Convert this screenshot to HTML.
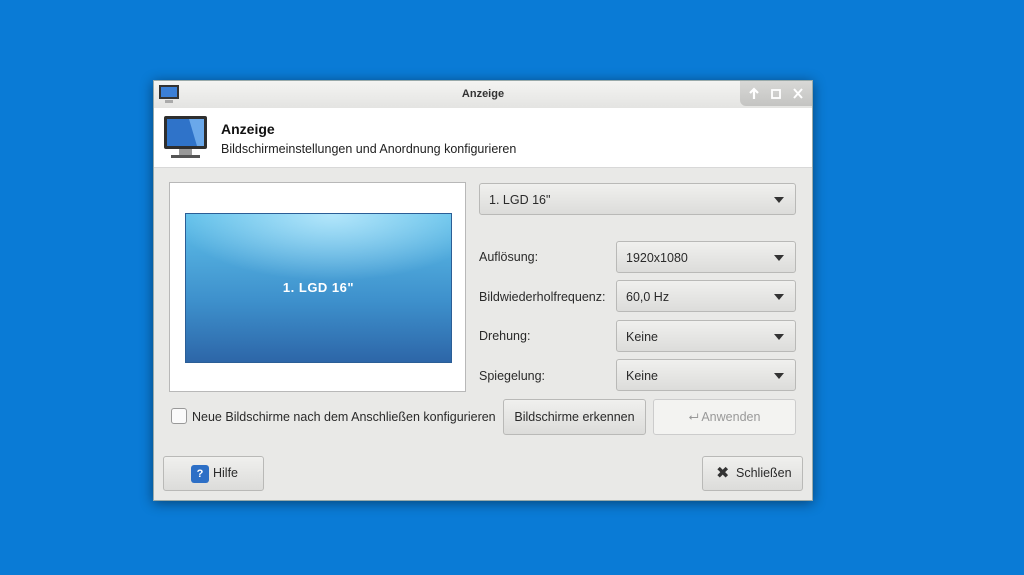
<!DOCTYPE html>
<html><head><meta charset="utf-8"><style>
*{box-sizing:border-box;margin:0;padding:0}
body{width:1024px;height:575px;background:#0a7bd6;font-family:"Liberation Sans",sans-serif;position:relative;overflow:hidden;color:#2a2a2a}
.win{position:absolute;left:153px;top:80px;width:660px;height:421px;background:#e9e9e7;border:1px solid #9aa;box-shadow:0 2px 12px rgba(0,0,0,.45)}
.tb{position:absolute;left:0;top:0;width:658px;height:27px;background:linear-gradient(#f4f4f2,#e4e4e2);font-size:11px;text-align:center;line-height:27px;color:#333;font-weight:bold}
.ctl{position:absolute;right:0;top:0;width:72px;height:25px;background:linear-gradient(#d8d8d6,#c4c4c2);border-bottom-left-radius:6px}
.hd{position:absolute;left:0;top:27px;width:658px;height:60px;background:#fff;border-bottom:1px solid #d8d8d8}
.abs{position:absolute}
.btn{position:absolute;background:linear-gradient(#f0f0ee,#dcdcda);border:1px solid #b9b9b7;border-radius:3px;font-size:12.5px;color:#2a2a2a}
.combo{padding-left:9px;line-height:32px}
.combo:after{content:"";position:absolute;right:11px;top:13px;border-left:5px solid transparent;border-right:5px solid transparent;border-top:6px solid #333}
.lbl{position:absolute;font-size:12.5px;left:325px}
</style></head><body>
<div class="win">
 <div class="tb">Anzeige
  <svg class="abs" style="left:4px;top:3px" width="22" height="20" viewBox="0 0 22 20"><rect x="1" y="1" width="20" height="14" fill="#333"/><rect x="3" y="3" width="16" height="10" fill="#3b7fd6"/><rect x="7" y="16" width="8" height="3" fill="#aaa"/></svg>
  <div class="ctl"><svg width="72" height="25" viewBox="0 0 72 25"><path d="M14 18V9M10 12l4-4 4 4" stroke="#fff" stroke-width="2.2" fill="none"/><rect x="32" y="9" width="8" height="8" stroke="#fff" stroke-width="1.8" fill="none"/><path d="M54 8l8 9M62 8l-8 9" stroke="#fff" stroke-width="2" fill="none"/></svg></div>
 </div>
 <div class="hd">
  <svg class="abs" style="left:9px;top:7px" width="45" height="46" viewBox="0 0 45 46"><rect x="1" y="1" width="43" height="33" rx="2" fill="#2e2e2e"/><rect x="4" y="4" width="37" height="27" fill="#2f73c9"/><polygon points="26,4 41,4 41,31 34,31" fill="#6aa8ea"/><rect x="16" y="34" width="13" height="6" fill="#999"/><rect x="8" y="40" width="29" height="3" fill="#555"/></svg>
  <div class="abs" style="left:67px;top:13px;font-size:14px;font-weight:bold;color:#111">Anzeige</div>
  <div class="abs" style="left:67px;top:34px;font-size:12.5px;color:#222">Bildschirmeinstellungen und Anordnung konfigurieren</div>
 </div>
 <div class="abs" style="left:15px;top:101px;width:297px;height:210px;background:#fff;border:1px solid #b8b8b8"></div>
 <div class="abs" style="left:31px;top:132px;width:267px;height:150px;border:1px solid #2b5e96;background:radial-gradient(ellipse 60% 45% at 55% 0%,rgba(200,240,255,.8),rgba(255,255,255,0)),linear-gradient(#5fc0ea,#3d8fcb 60%,#2d66a8);color:#fff;font-weight:bold;font-size:13px;text-align:center;line-height:148px;letter-spacing:.5px">1. LGD 16"</div>
 <div class="btn combo" style="left:325px;top:102px;width:317px;height:32px">1. LGD 16"</div>
 <div class="lbl" style="top:169px">Auflösung:</div>
 <div class="lbl" style="top:209px">Bildwiederholfrequenz:</div>
 <div class="lbl" style="top:248px">Drehung:</div>
 <div class="lbl" style="top:288px">Spiegelung:</div>
 <div class="btn combo" style="left:462px;top:160px;width:180px;height:32px">1920x1080</div>
 <div class="btn combo" style="left:462px;top:199px;width:180px;height:32px">60,0 Hz</div>
 <div class="btn combo" style="left:462px;top:239px;width:180px;height:32px">Keine</div>
 <div class="btn combo" style="left:462px;top:278px;width:180px;height:32px">Keine</div>
 <div class="abs" style="left:17px;top:327px;width:16px;height:16px;border:1px solid #999;border-radius:3px;background:#fafafa"></div>
 <div class="abs" style="left:38px;top:329px;font-size:12.5px">Neue Bildschirme nach dem Anschließen konfigurieren</div>
 <div class="btn" style="left:349px;top:318px;width:143px;height:36px;text-align:center;line-height:34px">Bildschirme erkennen</div>
 <div class="btn" style="left:499px;top:318px;width:143px;height:36px;text-align:center;line-height:34px;background:#f3f3f1;border-color:#ccc;color:#999">⮠ Anwenden</div>
 <div class="btn" style="left:9px;top:375px;width:101px;height:35px;line-height:33px;padding-left:49px"><span class="abs" style="left:27px;top:8px;width:18px;height:18px;background:#2d6fc6;border-radius:3px;color:#fff;font-weight:bold;font-size:11px;line-height:18px;text-align:center">?</span>Hilfe</div>
 <div class="btn" style="left:548px;top:375px;width:101px;height:35px;line-height:33px;padding-left:33px"><span class="abs" style="left:13px;top:0;font-size:16px;color:#333">✖</span>Schließen</div>
</div>
</body></html>
